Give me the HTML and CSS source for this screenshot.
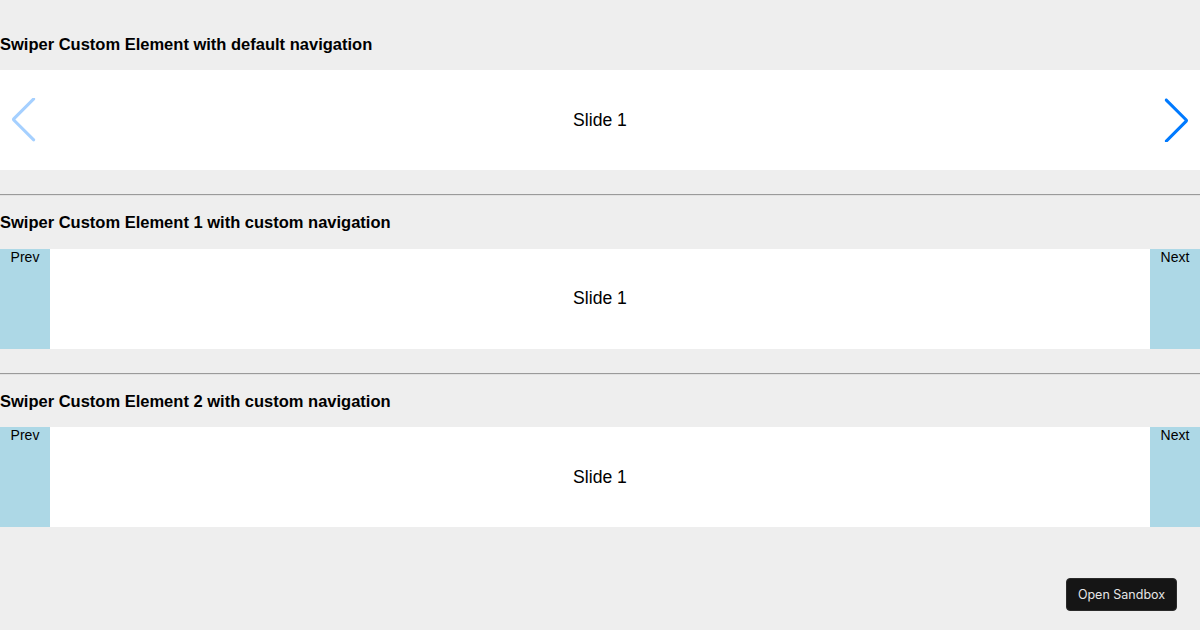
FILE: index.html
```html
<!DOCTYPE html>
<html>
<head>
	<meta charset="UTF-8" name="viewport" content="width=device-width, initial-scale=1">
	<title>Swiper Custom Elements</title>
	<link rel="stylesheet" href="styles.css">
</head>
<body>
	<div class="page">
		<h4 class="title first">Swiper Custom Element with default navigation</h4>
		<div class="swiper">
			<div class="slide">Slide 1</div>
			<div class="nav-arrow prev disabled">
				<svg viewBox="0 0 11 20"><path d="M0.38 20.08C0.11 19.8 0.11 19.37 0.38 19.09L9.2 10.28L0.38 1.46C0.11 1.19 0.11 0.75 0.38 0.48C0.65 0.21 1.09 0.21 1.36 0.48L10.43 9.55C10.84 9.95 10.84 10.61 10.43 11.01L1.36 20.08C1.09 20.35 0.65 20.35 0.38 20.08Z" fill="currentColor"/></svg>
			</div>
			<div class="nav-arrow next">
				<svg viewBox="0 0 11 20"><path d="M0.38 20.08C0.11 19.8 0.11 19.37 0.38 19.09L9.2 10.28L0.38 1.46C0.11 1.19 0.11 0.75 0.38 0.48C0.65 0.21 1.09 0.21 1.36 0.48L10.43 9.55C10.84 9.95 10.84 10.61 10.43 11.01L1.36 20.08C1.09 20.35 0.65 20.35 0.38 20.08Z" fill="currentColor"/></svg>
			</div>
		</div>

		<hr>
		<h4 class="title">Swiper Custom Element 1 with custom navigation</h4>
		<div class="custom-row">
			<div class="nav-box">Prev</div>
			<div class="slide">Slide 1</div>
			<div class="nav-box">Next</div>
		</div>

		<hr>
		<h4 class="title">Swiper Custom Element 2 with custom navigation</h4>
		<div class="custom-row">
			<div class="nav-box">Prev</div>
			<div class="slide">Slide 1</div>
			<div class="nav-box">Next</div>
		</div>
	</div>

	<a class="sandbox-btn">Open Sandbox</a>
</body>
</html>
```

FILE: styles.css
```css
html {
	font-family: "Liberation Sans", Arial, sans-serif;
}
body {
	background-color: #eeeeee;
	margin: 0;
	color: #000;
}
.page {
	padding-top: 34.5px;
}
.title {
	margin: 0 0 17.5px 0;
	font-size: 16.5px;
	line-height: 18px;
	font-weight: bold;
}
hr {
	margin: 24px 0 17px 0;
	border: 0;
	border-top: 1px solid #9a9a9a;
	border-bottom: 1px solid #e2e2e2;
	height: 0;
}
.swiper {
	position: relative;
	height: 100px;
	background: #fff;
}
.slide {
	height: 100px;
	background: #fff;
	display: flex;
	align-items: center;
	justify-content: center;
	font-size: 17.6px;
	flex: 1;
}
.nav-arrow {
	position: absolute;
	top: 50%;
	margin-top: -22px;
	width: 27px;
	height: 44px;
	color: #007aff;
	display: flex;
	align-items: center;
	justify-content: center;
}
.nav-arrow svg {
	width: 100%;
	height: 100%;
}
.nav-arrow.prev {
	left: 10px;
}
.nav-arrow.prev svg {
	transform: rotate(180deg);
}
.nav-arrow.next {
	right: 10px;
}
.nav-arrow.disabled {
	opacity: 0.35;
}
.custom-row {
	display: flex;
	height: 100px;
}
.nav-box {
	width: 50px;
	background: lightblue;
	text-align: center;
	font-size: 14px;
	line-height: 16px;
}
.sandbox-btn {
	position: fixed;
	right: 23px;
	bottom: 19px;
	box-sizing: border-box;
	width: 111px;
	height: 33px;
	display: flex;
	align-items: center;
	justify-content: center;
	background: #151515;
	border: 1px solid #2a2a2a;
	border-radius: 4px;
	color: #e6e6e6;
	font-family: Inter, sans-serif;
	font-size: 12.5px;
}
```
